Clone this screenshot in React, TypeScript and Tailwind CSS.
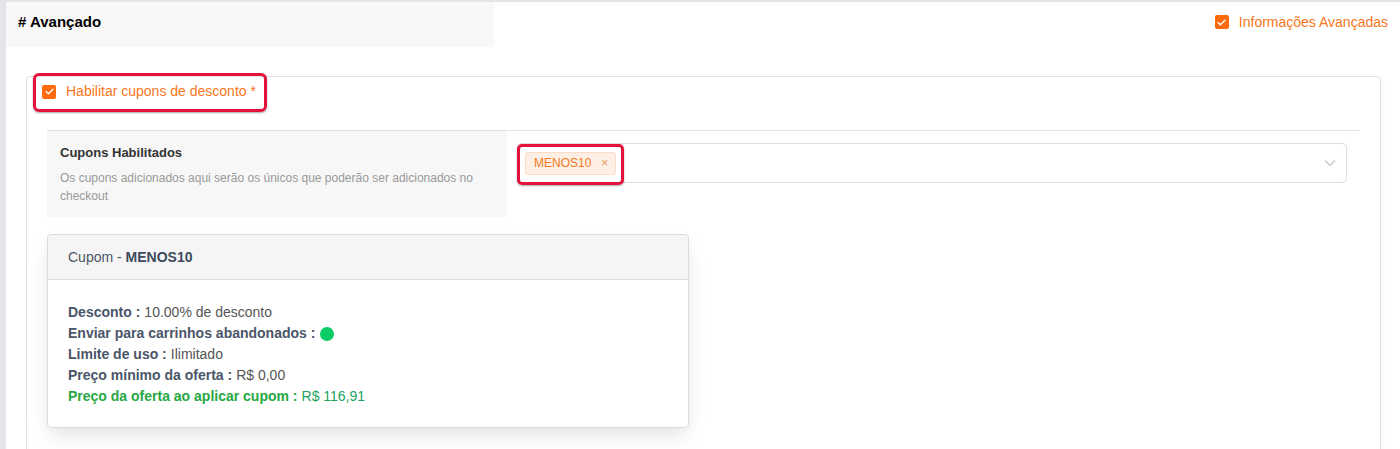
import React from 'react';

function CheckBox() {
  return (
    <span className="w-[14px] h-[14px] rounded-[2px] bg-[#ff6a0d] flex items-center justify-center shrink-0">
      <svg width="9" height="7" viewBox="0 0 9 7" fill="none">
        <path d="M1 3.6 L3.4 5.8 L8 1.2" stroke="white" strokeWidth="1.4" strokeLinecap="round" strokeLinejoin="round" />
      </svg>
    </span>
  );
}

export default function App() {
  const rows = [
    { label: 'Desconto', value: '10.00% de desconto' },
    { label: 'Enviar para carrinhos abandonados', dot: true },
    { label: 'Limite de uso', value: 'Ilimitado' },
    { label: 'Preço mínimo da oferta', value: 'R$ 0,00' },
  ];

  return (
    <div className="h-[449px] overflow-hidden bg-[#e3e5e9] pl-[6px] pt-[2px] font-['Liberation_Sans',Arial,sans-serif]">
      <div className="h-full bg-white">
        {/* Top bar */}
        <div className="flex items-start justify-between h-[45px]">
          <div className="w-[488px] h-full bg-[#f8f8f8] pl-[12px] pt-[10px]">
            <h3 className="text-[15px] leading-[20px] font-bold text-black">
              # Avançado
            </h3>
          </div>
          <label className="flex items-center gap-[10px] pr-[12px] pt-[10px] h-[30px]">
            <CheckBox />
            <span className="text-[14px] text-[#f7761c]">Informações Avançadas</span>
          </label>
        </div>

        {/* Main card */}
        <div className="ml-[20px] mr-[19px] mt-[29px] border border-[#e3e3e3] rounded-[4px] shadow-[2px_0_3px_rgba(0,0,0,0.03)] h-[400px] pt-[1px]">
          <div className="pl-[15px]">
            <label className="relative inline-flex items-center gap-[10px] h-[20px]">
              <CheckBox />
              <span className="text-[14px] text-[#f7761c]">Habilitar cupons de desconto *</span>
              <span className="absolute -left-[9px] -right-[11px] -top-[9px] -bottom-[10px] border-[3px] border-[#e3123c] rounded-[6px] shadow-[0_1px_2px_rgba(0,0,0,0.35)] pointer-events-none" />
            </label>
          </div>

          <div className="mx-[20px] mt-[28px] border-t border-[#e2e2e2] grid grid-cols-[460px_1fr]">
            <div className="bg-[#f7f7f7] px-[13px] pt-[13px] pb-[12px]">
              <div className="text-[13px] leading-[18px] font-bold text-[#333]">Cupons Habilitados</div>
              <p className="mt-[7px] text-[12px] leading-[18px] text-[#999]">
                Os cupons adicionados aqui serão os únicos que poderão ser adicionados no checkout
              </p>
            </div>
            <div className="pl-[10px] pr-[13px] pt-[12px]">
              <div className="h-[40px] border border-[#dcdfe6] rounded-[4px] flex items-center justify-between pl-[7px] pr-[10px]">
                <span className="relative inline-flex items-center h-[23px] pl-[8px] pr-[7px] gap-[10px] bg-[#fdefe4] border border-[#fbdcc6] rounded-[3px]">
                  <span className="text-[12px] text-[#f47a1f]">MENOS10</span>
                  <span className="text-[12px] text-[#f29a5c] leading-none">×</span>
                  <span className="absolute -left-[9px] -right-[9px] -top-[9px] -bottom-[11px] border-[3px] border-[#e3123c] rounded-[5px] shadow-[0_1px_2px_rgba(0,0,0,0.35)] pointer-events-none" />
                </span>
                <svg width="12" height="8" viewBox="0 0 12 8" fill="none">
                  <path d="M1 1.5 L6 6.5 L11 1.5" stroke="#c0c4cc" strokeWidth="1.1" />
                </svg>
              </div>
            </div>
          </div>

          {/* Coupon card */}
          <div className="ml-[20px] mt-[17px] w-[642px] border border-[#dcdcdc] rounded-[4px] bg-white shadow-[0_10px_20px_-4px_rgba(0,0,0,0.13)]">
            <div className="h-[45px] bg-[#f5f5f5] border-b border-[#dcdcdc] rounded-t-[4px] flex items-center pl-[20px] text-[14px] text-[#4a5568]">
              Cupom -&nbsp;<span className="font-bold text-[#3d4a5c]">MENOS10</span>
            </div>
            <div className="px-[20px] pt-[22px] pb-[20px] text-[14px] leading-[21px]">
              {rows.map((r) => (
                <div key={r.label} className="flex items-center">
                  <span className="font-bold text-[#4a5568]">{r.label} :</span>
                  {r.dot ? (
                    <span className="ml-[5px] w-[14px] h-[14px] rounded-full bg-[#0dcc63]" />
                  ) : (
                    <span className="ml-[4px] text-[#555]">{r.value}</span>
                  )}
                </div>
              ))}
              <div className="flex items-center">
                <span className="font-bold text-[#28a745]">Preço da oferta ao aplicar cupom :</span>
                <span className="ml-[4px] text-[#21a35e]">R$ 116,91</span>
              </div>
            </div>
          </div>
        </div>
      </div>
    </div>
  );
}
